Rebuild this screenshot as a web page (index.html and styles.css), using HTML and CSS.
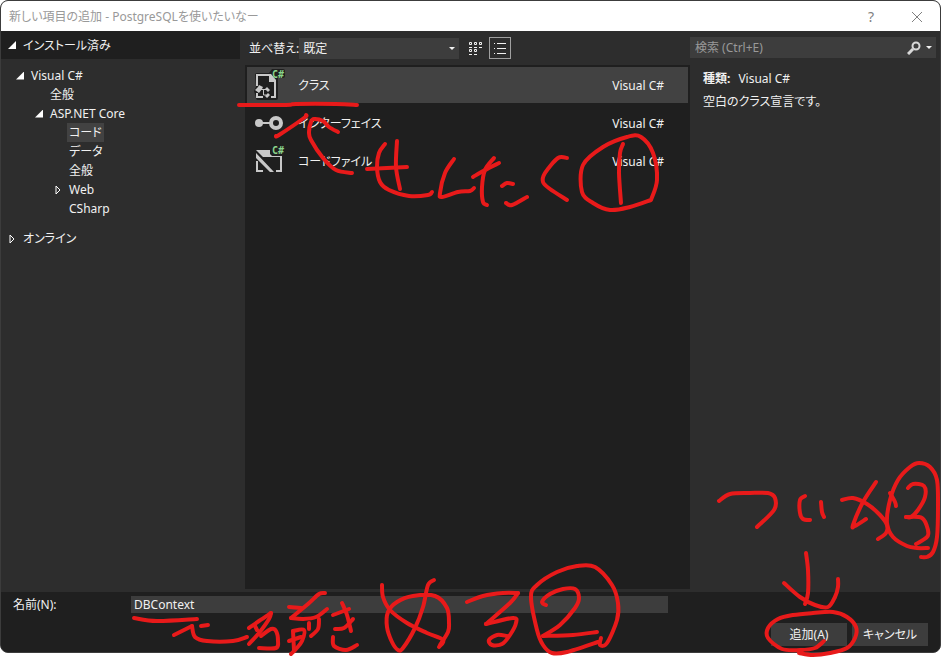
FILE: index.html
```html
<!DOCTYPE html>
<html lang="ja">
<head>
	<meta charset="utf-8">
	<title>新しい項目の追加</title>
	<link rel="stylesheet" href="styles.css">
</head>
<body>
	<div class="dialog">
		<header class="titlebar">
			<h1>新しい項目の追加 - PostgreSQLを使いたいなー</h1>
			<button class="help" aria-label="ヘルプ">?</button>
			<button class="close" aria-label="閉じる">
				<svg width="12" height="12" viewBox="0 0 12 12"><path d="M1 1L11 11M11 1L1 11" stroke="#808080" fill="none"/></svg>
			</button>
		</header>

		<main class="content">
			<nav class="sidebar">
				<a class="installed" href="#"><span class="arrow open"></span>インストール済み</a>
				<ul class="tree">
					<li class="level1"><a href="#"><span class="arrow open"></span>Visual C#</a></li>
					<li class="level2"><a href="#"><span class="arrow"></span>全般</a></li>
					<li class="level2"><a href="#"><span class="arrow open"></span>ASP.NET Core</a></li>
					<li class="level3"><a href="#"><span class="arrow"></span><span class="current">コード</span></a></li>
					<li class="level3"><a href="#"><span class="arrow"></span>データ</a></li>
					<li class="level3"><a href="#"><span class="arrow"></span>全般</a></li>
					<li class="level3"><a href="#"><svg class="arrow" viewBox="0 0 8 10"><path d="M2 1V9L6 5Z" fill="none" stroke="#fff"/></svg>Web</a></li>
					<li class="level3"><a href="#"><span class="arrow"></span>CSharp</a></li>
				</ul>
				<a class="online" href="#"><svg class="arrow" viewBox="0 0 8 10"><path d="M2 1V9L6 5Z" fill="none" stroke="#fff"/></svg>オンライン</a>
			</nav>

			<section class="middle">
				<div class="toolbar">
					<label for="sort">並べ替え:</label>
					<div class="sortbox">
						<select id="sort"><option>既定</option></select>
						<span class="caret"></span>
					</div>
					<button class="view" aria-label="小さいアイコン">
						<svg width="14" height="15" viewBox="0 0 14 15" fill="none" stroke="#f1f1f1">
							<path d="M.5 1.500h2v2h-2zM5.500 1.500h2v2h-2zM10.500 1.500h2v2h-2zM.5 8.500h2v2h-2zM5.500 8.500h2v2h-2z"/>
							<path d="M0 6.500h3M5 6.500h3M10 6.500h3M0 13.500h3M5 13.500h3"/>
						</svg>
					</button>
					<button class="view active" aria-label="一覧">
						<svg width="12" height="11" viewBox="0 0 12 11" fill="none" stroke="#f1f1f1">
							<path d="M0 .5h1M3 .5h9M0 5.500h1M3 5.500h9M0 10.500h1M3 10.500h9"/>
						</svg>
					</button>
				</div>
				<div class="templates">
					<button class="template selected">
						<svg class="icon" width="32" height="32" viewBox="0 0 32 32">
							<path d="M1 6q0-2 2-2h12l3-4h11q2 0 2 2v5q0 2-2 2h-5v20q0 2-2 2H4q-2 0-2-2l-2-7 2-4z" fill="#1f1f1f"/>
							<path d="M3 17V6H16L21 12V28H17M9 28H3V24" fill="none" stroke="#c8c8c8" stroke-width="2"/>
							<path d="M15 5h2l5 6v2h-7z" fill="#c8c8c8"/>
							<path d="M1 21l3-3 1-2 4 2-1 2-3 4zM11 20l2-2 3 3-2 2zM11 27l3-3 2 2-3 3z" fill="#c8c8c8"/>
							<path d="M6 20.500h6M9.500 20v6h3" fill="none" stroke="#c8c8c8"/>
							<text x="18" y="9">C#</text>
						</svg>
						<span class="name">クラス</span><span class="lang">Visual C#</span>
					</button>
					<button class="template">
						<svg class="icon" width="32" height="32" viewBox="0 0 32 32">
							<circle cx="5" cy="16" r="4" fill="#c8c8c8"/>
							<path d="M8 16h8" stroke="#c8c8c8" stroke-width="2"/>
							<circle cx="22" cy="16" r="5" fill="none" stroke="#c8c8c8" stroke-width="4"/>
						</svg>
						<span class="name">インターフェイス</span><span class="lang">Visual C#</span>
					</button>
					<button class="template">
						<svg class="icon" width="32" height="32" viewBox="0 0 32 32">
							<path d="M2 5h14v4l2 2h10v1H9zM2 8L20 27h-4L2 13z" fill="#c8c8c8"/>
							<path d="M3 16V26H9M27 11V26H22" fill="none" stroke="#c8c8c8" stroke-width="2"/>
							<text x="18" y="9">C#</text>
						</svg>
						<span class="name">コードファイル</span><span class="lang">Visual C#</span>
					</button>
				</div>
			</section>

			<aside class="details">
				<div class="search">
					<input type="text" placeholder="検索 (Ctrl+E)" aria-label="検索">
					<svg width="14" height="14" viewBox="0 0 14 14" fill="none" stroke="#d8d8d8"><circle cx="9" cy="5" r="3.500" stroke-width="2"/><path d="M6 8L1 13" stroke-width="3"/></svg>
					<span class="caret"></span>
				</div>
				<p><b>種類:</b>Visual C#</p>
				<p>空白のクラス宣言です。</p>
			</aside>
		</main>

		<footer class="footer">
			<div class="namerow">
				<label for="name">名前(N):</label>
				<input id="name" type="text" value="DBContext">
			</div>
			<div class="buttons">
				<button>追加(A)</button>
				<button>キャンセル</button>
			</div>
		</footer>
	</div>

	<svg class="ink" id="ink" width="941" height="658" viewBox="0 0 941 658" aria-hidden="true"></svg>
	<script src="ink.js"></script>
</body>
</html>
```
FILE: styles.css
```css
* {
	box-sizing: border-box;
}

body {
	margin: 0;
	height: 100vh;
	padding-bottom: 5px;
	overflow: hidden;
	background: #fff;
	color: #f1f1f1;
	font-family: "Noto Sans", "Noto Sans CJK JP", sans-serif;
	font-size: 12px;
	line-height: 19px;
	font-feature-settings: "palt";
}

button, input, select {
	font: inherit;
	font-feature-settings: inherit;
	color: inherit;
	border: 0;
	border-radius: 0;
	margin: 0;
	padding: 0;
	background: none;
}

a {
	color: inherit;
	text-decoration: none;
}

.dialog {
	height: 100%;
	display: flex;
	flex-direction: column;
	border: 1px solid #3c3c3c;
	border-radius: 8px;
	overflow: hidden;
	background: #2d2d2d;
}

.titlebar {
	display: flex;
	align-items: center;
	height: 30px;
	padding-left: 8px;
	background: #fff;
	color: #999;
}

.titlebar h1 {
	flex: 1;
	margin: 0;
	font-size: 12px;
	font-weight: normal;
}

.titlebar button {
	width: 46px;
	height: 30px;
	color: #808080;
}

.titlebar .help {
	font-size: 14px;
}

.close svg {
	vertical-align: middle;
}

.content {
	flex: 1;
	min-height: 0;
	display: grid;
	grid-template-columns: 239px 9fr 5fr;
}

/* left tree */
.sidebar a {
	display: flex;
	align-items: center;
}

.installed {
	height: 28px;
	padding-left: 7px;
	background: #1f1f1f;
}

.arrow {
	width: 8px;
	height: 10px;
	margin-right: 7px;
	flex: none;
}

.arrow.open {
	height: 8px;
	background: #fff;
	clip-path: polygon(100% 0, 100% 100%, 0 100%);
}

.tree {
	list-style: none;
	margin: 0;
	padding: 7px 0 11px;
}

.level1 { padding-left: 15px; }
.level2 { padding-left: 34px; }
.level3 { padding-left: 53px; }

.current {
	background: #424242;
	margin-left: -2px;
	padding: 0 2px;
}

.online {
	padding-left: 7px;
}

/* template list */
.middle {
	display: flex;
	flex-direction: column;
	padding: 0 0 3px 5px;
}

.toolbar {
	display: flex;
	align-items: center;
	height: 34px;
	padding-left: 4px;
}

.sortbox {
	position: relative;
	width: 160px;
	margin-right: 9px;
}

.sortbox select {
	appearance: none;
	width: 100%;
	height: 21px;
	padding-left: 4px;
	background: #3d3d3d;
}

.caret {
	border: 3px solid transparent;
	border-top-color: #f1f1f1;
	border-bottom: 0;
}

.sortbox .caret {
	position: absolute;
	right: 4px;
	top: 9px;
}

.view {
	display: flex;
	align-items: center;
	justify-content: center;
	width: 16px;
	height: 22px;
}

.view.active {
	width: 22px;
	margin-left: 5px;
	border: 1px solid #a0a0a0;
}

.templates {
	flex: 1;
	padding: 2px;
	background: #1f1f1f;
}

.template {
	display: flex;
	align-items: center;
	width: 100%;
	height: 36px;
	margin-bottom: 2px;
	padding: 0 24px 0 7px;
	text-align: left;
}

.template.selected {
	background: #424242;
}

.icon text {
	fill: #8bd48b;
	font: bold 10px "DejaVu Sans Mono", monospace;
}

.name {
	flex: 1;
	padding-left: 12px;
}

/* right column */
.search {
	display: flex;
	align-items: center;
	height: 21px;
	margin: 6px 4px 11px 0;
	padding: 0 4px 0 5px;
	background: #3d3d3d;
}

.search input {
	flex: 1;
	min-width: 0;
}

.search input::placeholder {
	color: #999;
	opacity: 1;
}

.search .caret {
	margin-left: 5px;
}

.details p {
	margin: 0 0 4px 13px;
}

.details b {
	margin-right: 8px;
}

/* name field and buttons */
.footer {
	padding: 3px 12px 6px;
	background: #1f1f1f;
}

.namerow {
	display: flex;
	align-items: center;
	margin-bottom: 9px;
}

.namerow label {
	width: 118px;
}

.namerow input {
	flex: 0 1 537px;
	height: 17px;
	padding-left: 3px;
	background: #3d3d3d;
}

.buttons {
	display: flex;
	justify-content: flex-end;
	gap: 5px;
}

.buttons button {
	width: 76px;
	height: 23px;
	background: #3d3d3d;
}

.ink {
	position: absolute;
	top: 0;
	left: 0;
	pointer-events: none;
	fill: none;
	stroke: #e81a1a;
	stroke-width: 4px;
	stroke-linecap: round;
	stroke-linejoin: round;
}
```
FILE: ink.js
```js
// pen strokes, each one a list of x,y points
var strokes = [
	// step 1
	"239,105 286,105 296,104 336,104 357,105",
	"276,136 279,135 304,118 306,115",
	"352,173 336,170 323,158 311,140 309,132 311,122 314,119 323,121 329,127 338,132",
	"367,169 407,167",
	"397,141 396,167 400,189",
	"385,144 379,153 377,167 380,182 389,190 409,196 428,195 432,192",
	"454,159 445,173 440,193 442,197 458,192 470,191 474,188",
	"473,177 485,170 499,163",
	"494,158 485,170 482,187 483,202 487,205",
	"502,186 507,183 513,184",
	"506,203 512,205 527,197",
	"567,158 558,158 545,173 543,182 550,189 567,200",
	"623,144 620,153 619,173 621,203",
	"651,200 657,180 653,153 641,137 627,137 603,147 583,165 582,192 593,203 610,210 630,207 651,200",
	// step 2
	"134,618 157,621 197,619",
	"174,635 192,626",
	"208,625 201,626",
	"192,626 195,637 207,641 233,641 247,637",
	"249,628 259,621 271,613",
	"271,613 269,619 259,633 249,644",
	"255,626 257,630",
	"261,636 271,629 276,631 278,641 276,648 259,648",
	"289,607 301,608",
	"325,593 319,594 308,604 291,618",
	"291,618 303,619 316,617 327,609",
	"293,631 304,630 302,641 296,649 291,654",
	"289,641 301,637",
	"293,631 294,650",
	"309,623 309,629",
	"319,619 318,629 311,636",
	"333,615 349,609",
	"335,629 344,628 353,619",
	"342,603 347,615 351,631",
	"333,637 334,646 346,650 357,645",
	"382,585 383,597 390,610 407,623 427,633 443,640 439,647",
	"434,580 428,585 423,607 415,628 403,648 398,650 392,642 387,627 388,612 397,602 413,596 435,596 447,608 449,623 448,632 440,645",
	"467,602 483,596 503,593 518,593",
	"518,593 510,603 486,624",
	"486,624 513,618 516,623 510,635 502,644 492,645 489,640 497,635 507,636",
	"546,605 542,602 550,594 563,589 575,589 579,598 575,608 560,625 543,636",
	"543,636 573,635 597,632",
	"601,638 600,645 607,643 617,620 618,603 612,585 595,567 577,566 557,572 537,585 531,597 537,630 543,645 552,653 567,652 598,642",
	// step 3
	"719,501 730,494 750,493 768,493 775,498 774,510 757,527",
	"805,496 800,500 800,513 803,519 810,520",
	"821,502 822,512 824,517",
	"842,500 853,498 867,504 880,515 887,525 886,533 878,539",
	"876,482 863,502 853,525 855,526 866,519",
	"890,493 895,502 896,506",
	"928,548 917,548 907,546 893,537 887,523 890,500 898,480 910,467 919,463 930,467 937,480 938,507 937,537 933,552 927,557 921,557",
	"908,488 913,484 924,486 925,497 918,510 911,517 906,517",
	"906,517 922,518 928,530 927,537 916,544",
	"806,553 808,570 808,593 805,604",
	"784,583 800,597 815,605 828,607 835,597 838,587 838,579",
	"824,641 815,648 800,650 782,649 768,638 768,628 778,619 793,615 813,613 833,612 847,617 856,627 855,638 847,648 830,653 813,655 799,653"
];

// turns the points into a smooth curve through all of them
function strokePath(points){
	var d = "M" + points[0];
	for(var i=0;i<points.length-1;i++){
		var p0 = points[i-1] || points[i];
		var p1 = points[i];
		var p2 = points[i+1];
		var p3 = points[i+2] || p2;
		d += "C" + [
			p1[0]+(p2[0]-p0[0])/6, p1[1]+(p2[1]-p0[1])/6,
			p2[0]-(p3[0]-p1[0])/6, p2[1]-(p3[1]-p1[1])/6,
			p2[0], p2[1]
		];
	}
	return d;
}

var ink = document.getElementById("ink");
strokes.forEach(function(stroke){
	var points = stroke.split(" ").map(function(p){
		return p.split(",").map(Number);
	});
	var path = document.createElementNS("http://www.w3.org/2000/svg","path");
	path.setAttribute("d",strokePath(points));
	ink.appendChild(path);
});
```
